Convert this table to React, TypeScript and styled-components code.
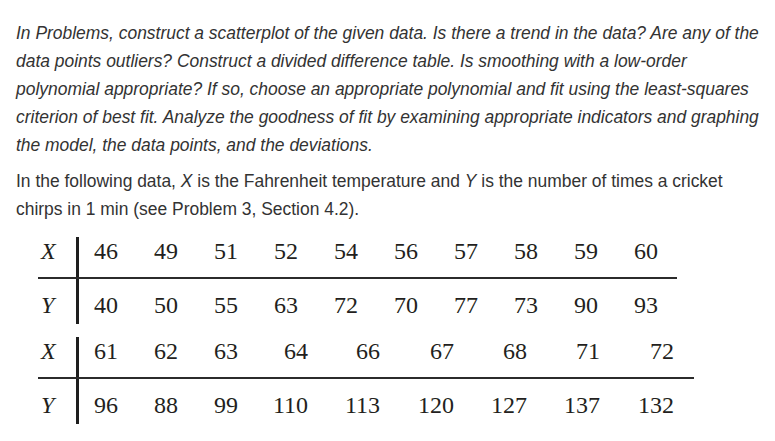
import React from "react";
import styled, { createGlobalStyle } from "styled-components";

const GlobalStyle = createGlobalStyle`
  body {
    margin: 8px;
    background: #fff;
  }
`;

const Page = styled.div`
  padding: 11px 0 0 8px;
  font-family: "Liberation Sans", Arial, sans-serif;
  font-size: 17.45px;
  line-height: 28px;
  color: #333;
`;

const Paragraph = styled.p<{ $italic?: boolean }>`
  margin: 0 0 8px;
  white-space: nowrap;
  font-style: ${(p) => (p.$italic ? "italic" : "normal")};
`;

const Var = styled.i`
  font-style: italic;
`;

const Table = styled.div<{ $cols: number[]; $trail: number }>`
  display: grid;
  grid-template-columns: 38px 3px ${(p) => p.$cols.map((c) => `${c}px`).join(" ")} ${(p) => p.$trail}px;
  grid-template-rows: auto 2px auto;
  width: max-content;
  margin: 14px 0 0 22px;
  font-family: "Liberation Serif", "Times New Roman", serif;
  font-size: 24px;
  line-height: 28px;
  color: #231f20;
  & + & {
    margin-top: 13px;
  }
`;

const Cell = styled.div<{ $row: number }>`
  grid-row: ${(p) => p.$row};
  text-align: right;
  padding: ${(p) => (p.$row === 1 ? "0 0 12px" : "12px 0 5px")};
`;

const Label = styled(Cell)`
  grid-column: 1;
  text-align: left;
  padding-left: 3px;
  font-style: italic;
`;

const Bar = styled.div`
  grid-column: 2;
  grid-row: 1 / 4;
  background: #1e1e1e;
`;

const Rule = styled.div`
  grid-column: 1 / -1;
  grid-row: 2;
  background: #2b2b2b;
`;

type Data = { xs: number[]; ys: number[]; cols: number[]; trail: number };

const tables: Data[] = [
  {
    xs: [46, 49, 51, 52, 54, 56, 57, 58, 59, 60],
    ys: [40, 50, 55, 63, 72, 70, 77, 73, 90, 93],
    cols: [39, 60, 60, 60, 60, 60, 60, 60, 60, 60],
    trail: 19,
  },
  {
    xs: [61, 62, 63, 64, 66, 67, 68, 71, 72],
    ys: [96, 88, 99, 110, 113, 120, 127, 137, 132],
    cols: [39, 60, 60, 70, 72, 74, 73, 73, 74],
    trail: 20,
  },
];

const DataTable = ({ xs, ys, cols, trail }: Data) => (
  <Table $cols={cols} $trail={trail}>
    <Label $row={1}>X</Label>
    <Bar />
    {xs.map((v, i) => (
      <Cell key={`x${i}`} $row={1} style={{ gridColumn: i + 3 }}>
        {v}
      </Cell>
    ))}
    <Rule />
    <Label $row={3}>Y</Label>
    {ys.map((v, i) => (
      <Cell key={`y${i}`} $row={3} style={{ gridColumn: i + 3 }}>
        {v}
      </Cell>
    ))}
  </Table>
);

export default function App() {
  return (
    <>
      <GlobalStyle />
      <Page>
        <Paragraph $italic>
          In Problems, construct a scatterplot of the given data. Is there a trend in the data? Are any of the
          <br />
          data points outliers? Construct a divided difference table. Is smoothing with a low-order
          <br />
          polynomial appropriate? If so, choose an appropriate polynomial and fit using the least-squares
          <br />
          criterion of best fit. Analyze the goodness of fit by examining appropriate indicators and graphing
          <br />
          the model, the data points, and the deviations.
        </Paragraph>
        <Paragraph>
          In the following data, <Var>X</Var> is the Fahrenheit temperature and <Var>Y</Var> is the number of
          times a cricket
          <br />
          chirps in 1 min (see Problem 3, Section 4.2).
        </Paragraph>
        {tables.map((t, i) => (
          <DataTable key={i} {...t} />
        ))}
      </Page>
    </>
  );
}
